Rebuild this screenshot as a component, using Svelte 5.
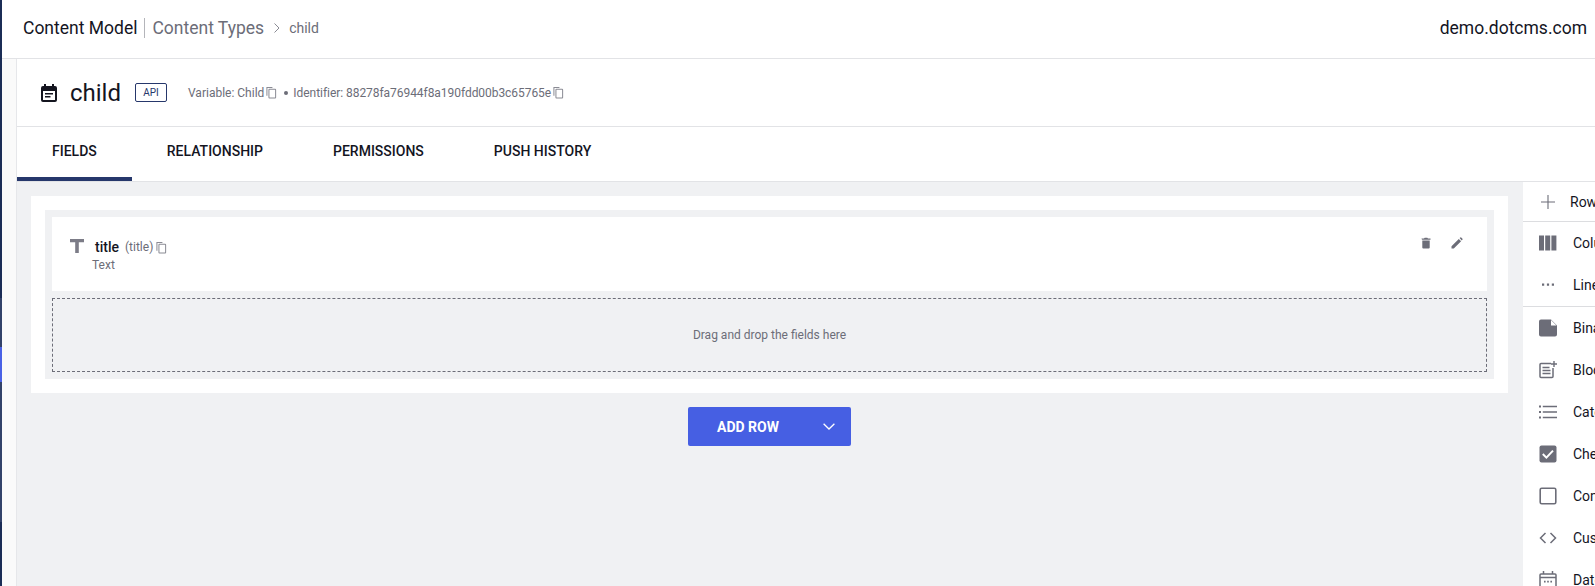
<script lang="ts">
	// Right rail: the page clips these labels at the window edge
	const layoutItems = [
		{ label: 'Column', icon: 'columns' },
		{ label: 'Line Divider', icon: 'dots' }
	];
	const fieldItems = [
		{ label: 'Binary', icon: 'binary' },
		{ label: 'Block Editor', icon: 'block' },
		{ label: 'Category', icon: 'list' },
		{ label: 'Checkbox', icon: 'check' },
		{ label: 'Constant', icon: 'box' },
		{ label: 'Custom', icon: 'code' },
		{ label: 'Date', icon: 'date' }
	];
	const tabs = ['Fields', 'Relationship', 'Permissions', 'Push History'];
</script>

{#snippet copyIcon()}
	<svg class="copy" viewBox="0 0 12 14" width="11" height="13" fill="none" stroke="currentColor" stroke-width="1.1">
		<path d="M1 10.5V1.5h6" />
		<rect x="3.2" y="3.4" width="7.3" height="9.6" rx="0.6" />
	</svg>
{/snippet}

{#snippet railIcon(name: string)}
	<svg class="rail-icon" viewBox="0 0 18 18" width="18" height="18">
		{#if name === 'columns'}
			<path fill="currentColor" d="M0 1h5v15H0zM6.2 1h5v15h-5zM12.4 1h5v15h-5z" transform="translate(0 .5)" />
		{:else if name === 'dots'}
			<path fill="currentColor" d="M3 7.6h2.2v2.2H3zM7.9 7.6h2.2v2.2H7.9zM12.8 7.6H15v2.2h-2.2z" />
		{:else if name === 'binary'}
			<path fill="currentColor" d="M2 0.5h10l6 6v9a2 2 0 0 1-2 2H2a2 2 0 0 1-2-2v-13a2 2 0 0 1 2-2z" />
			<path fill="#fff" d="M12 1v5.500h5.500z" />
		{:else if name === 'block'}
			<path fill="none" stroke="currentColor" stroke-width="1.5" d="M12 2.5H2a1 1 0 0 0-1 1v12a1 1 0 0 0 1 1h11a1 1 0 0 0 1-1V7" />
			<path fill="none" stroke="currentColor" stroke-width="1.4" d="M3.5 6.5h7M3.500 9.5h8M3.500 12.5h8M15 0v6M12 3h6" />
		{:else if name === 'list'}
			<path fill="currentColor" d="M0 2.6h2v2H0zM0 8h2v2H0zM0 13.4h2v2H0z" />
			<path fill="none" stroke="currentColor" stroke-width="1.5" d="M3.8 3.6H18M3.8 9H18M3.8 14.4H18" />
		{:else if name === 'check'}
			<rect x="0.5" y="0.5" width="17" height="17" rx="2" fill="currentColor" />
			<path fill="none" stroke="#fff" stroke-width="2" d="M3.8 9l3.6 3.6 6.6-7" />
		{:else if name === 'box'}
			<rect x="1.2" y="1.2" width="15.6" height="15.6" rx="1.5" fill="none" stroke="currentColor" stroke-width="1.6" />
		{:else if name === 'code'}
			<path fill="none" stroke="currentColor" stroke-width="1.5" d="M6.500 4L1.500 9l5 5M11.500 4l5 5-5 5" />
		{:else}
			<path fill="none" stroke="currentColor" stroke-width="1.5" d="M2 3h14a1 1 0 0 1 1 1v12a1 1 0 0 1-1 1H2a1 1 0 0 1-1-1V4a1 1 0 0 1 1-1zM1 6.500h16M4.500 0v3.500M13.500 0v3.500" />
			<path fill="currentColor" d="M5 9.800h1.600v1.600H5zM8.200 9.800h1.600v1.600H8.200zM11.400 9.800H13v1.600h-1.600z" />
		{/if}
	</svg>
{/snippet}

<div class="page">
	<div class="nav-strip">
		<span class="seg navy"></span>
		<span class="seg slate-top"></span>
		<span class="seg active"></span>
		<span class="seg slate"></span>
		<span class="seg navy-end"></span>
	</div>

	<div class="shell">
		<header class="topbar">
			<div class="crumbs">
				<span class="crumb-root">Content Model</span>
				<span class="crumb-sep"></span>
				<span class="crumb-parent">Content Types</span>
				<svg class="crumb-arrow" viewBox="0 0 8 12" width="8" height="12" fill="none" stroke="currentColor" stroke-width="1">
					<path d="M1.500 1.500L6 6l-4.500 4.500" />
				</svg>
				<span class="crumb-current">child</span>
			</div>
			<div class="site">demo.dotcms.com</div>
		</header>

		<div class="body">
			<div class="gutter"></div>
			<div class="content">
				<section class="title-bar">
					<svg class="type-icon" viewBox="0 0 16 18" width="16" height="18">
						<path fill="#14151f" d="M3 0h2v2h6V0h2v2h1a2 2 0 0 1 2 2v12a2 2 0 0 1-2 2H2a2 2 0 0 1-2-2V4a2 2 0 0 1 2-2h1z" />
						<path fill="#fff" d="M2 7h12v9H2z" />
						<path fill="#14151f" d="M4 9h8v1.600H4zM4 12h5.500v1.600H4z" />
					</svg>
					<h1>child</h1>
					<span class="api">API</span>
					<div class="meta">
						<span>Variable: Child</span>
						{@render copyIcon()}
						<span class="dot"></span>
						<span class="identifier">Identifier: 88278fa76944f8a190fdd00b3c65765e</span>
						{@render copyIcon()}
					</div>
				</section>

				<nav class="tabs">
					{#each tabs as tab, i}
						<div class="tab" class:selected={i === 0}>{tab}</div>
					{/each}
				</nav>

				<div class="workspace">
					<main class="canvas">
						<div class="card">
							<div class="row-inner">
								<div class="field">
									<svg class="t-icon" viewBox="0 0 14 14" width="14" height="14">
										<path fill="currentColor" d="M0 0h14v3.200H8.800V14H5.200V3.200H0z" />
									</svg>
									<div class="field-text">
										<div class="field-head">
											<span class="field-name">title</span>
											<span class="field-var">(title)</span>
											{@render copyIcon()}
										</div>
										<div class="field-type">Text</div>
									</div>
									<div class="field-actions">
										<svg viewBox="0 0 12 12" width="12" height="12">
											<path fill="currentColor" d="M1.500 1.500h2.500l.7-.8h2.600l.7.8h2.500v1.300h-8.500zM2.300 3.500h7.400v7a1 1 0 0 1-1 1H3.300a1 1 0 0 1-1-1z" />
										</svg>
										<svg viewBox="0 0 12 12" width="12" height="12">
											<path fill="currentColor" d="M0.500 9.200L7.800 1.900l2.300 2.300-7.300 7.300H.5zM8.600 1.100l.8-.6a.6.6 0 0 1 .8 0l1.300 1.300a.6.6 0 0 1 0 .8l-.7.800z" />
										</svg>
									</div>
								</div>
								<div class="dropzone">Drag and drop the fields here</div>
							</div>
						</div>
						<button class="add-row" type="button">
							<span>ADD ROW</span>
							<svg viewBox="0 0 12 7" width="12" height="7" fill="none" stroke="currentColor" stroke-width="1.300">
								<path d="M.6.800L6 6l5.400-5.200" />
							</svg>
						</button>
					</main>

					<aside class="rail">
						<div class="rail-group first">
							<div class="rail-item row-item">
								<svg class="rail-icon" viewBox="0 0 18 18" width="18" height="18" fill="none" stroke="currentColor" stroke-width="1.100">
									<path d="M9 2v14M2 9h14" />
								</svg>
								<span>Row</span>
							</div>
						</div>
						<div class="rail-group">
							{#each layoutItems as item}
								<div class="rail-item">
									{@render railIcon(item.icon)}
									<span>{item.label}</span>
								</div>
							{/each}
						</div>
						<div class="rail-fields">
							{#each fieldItems as item}
								<div class="rail-item">
									{@render railIcon(item.icon)}
									<span>{item.label}</span>
								</div>
							{/each}
						</div>
					</aside>
				</div>
			</div>
		</div>
	</div>
</div>

<style>
	:global(body) {
		margin: 0;
		overflow: hidden;
	}

	.page {
		display: flex;
		width: 1595px;
		height: 586px;
		overflow: hidden;
		background: #fff;
		font-family: Roboto, 'Liberation Sans', sans-serif;
		color: #14151f;
	}

	.nav-strip {
		display: flex;
		flex-direction: column;
		flex: 0 0 2px;
	}

	.seg {
		display: block;
	}

	.navy {
		height: 298px;
		background: #1b2d56;
	}

	.slate-top {
		height: 49px;
		background: #33436a;
	}

	.active {
		height: 35px;
		background: #4a62e6;
	}

	.slate {
		height: 140px;
		background: #33436a;
	}

	.navy-end {
		flex: 1;
		background: #1b2d56;
	}

	.shell {
		display: flex;
		flex-direction: column;
		flex: 1;
		min-width: 0;
	}

	.topbar {
		display: flex;
		align-items: center;
		justify-content: space-between;
		box-sizing: border-box;
		height: 59px;
		padding: 0 8px 2px 21px;
		border-bottom: 1px solid #e2e3e6;
	}

	.crumbs {
		display: flex;
		align-items: center;
	}

	.crumb-root {
		font-size: 17.5px;
	}

	.crumb-sep {
		width: 1px;
		height: 20px;
		margin: 0 7px;
		background: #b4b5ba;
	}

	.crumb-parent {
		font-size: 17.5px;
		color: #6c6d78;
	}

	.crumb-arrow {
		margin: 0 8px 0 9px;
		color: #8a8b94;
	}

	.crumb-current {
		font-size: 14px;
		color: #6c6d78;
	}

	.site {
		font-size: 17.5px;
	}

	.body {
		display: flex;
		flex: 1;
		min-height: 0;
	}

	.gutter {
		box-sizing: border-box;
		flex: 0 0 15px;
		background: #fafafa;
		border-right: 1px solid #e6e7ea;
	}

	.content {
		display: flex;
		flex-direction: column;
		flex: 1;
		min-width: 0;
	}

	.title-bar {
		display: flex;
		align-items: center;
		box-sizing: border-box;
		height: 68px;
		padding: 0 0 0 24px;
		border-bottom: 1px solid #e2e3e6;
	}

	.type-icon {
		margin-right: 13px;
	}

	h1 {
		margin: 0 14px 0 0;
		font-size: 24px;
		font-weight: 400;
		line-height: 1;
	}

	.api {
		box-sizing: border-box;
		width: 32px;
		height: 19px;
		margin-right: 21px;
		border: 1px solid #26376b;
		border-radius: 2px;
		font-size: 10px;
		line-height: 17px;
		text-align: center;
		color: #26376b;
	}

	.meta {
		display: flex;
		align-items: center;
		font-size: 12px;
		color: #6c6d78;
	}

	.identifier {
		letter-spacing: -0.05px;
	}

	.copy {
		margin-left: 2px;
		color: #8a8b94;
	}

	.dot {
		width: 4px;
		height: 4px;
		margin: 0 5px 0 7px;
		border-radius: 50%;
		background: #6c6d78;
	}

	.tabs {
		display: flex;
		box-sizing: border-box;
		height: 55px;
		border-bottom: 1px solid #e2e3e6;
	}

	.tab {
		box-sizing: border-box;
		height: 54px;
		padding: 15px 35px 0;
		font-size: 14px;
		font-weight: 500;
		line-height: 18px;
		text-transform: uppercase;
	}

	.tab.selected {
		border-bottom: 4px solid #26376b;
	}

	.workspace {
		display: flex;
		flex: 1;
		min-height: 0;
	}

	.canvas {
		display: flex;
		flex-direction: column;
		align-items: center;
		flex: 1;
		min-width: 0;
		padding: 14px 15px 0 14px;
		background: #f0f1f3;
	}

	.card {
		align-self: stretch;
		box-sizing: border-box;
		padding: 14px;
		background: #fff;
	}

	.row-inner {
		display: flex;
		flex-direction: column;
		gap: 7px;
		padding: 7px;
		background: #f0f1f3;
	}

	.field {
		display: flex;
		box-sizing: border-box;
		height: 74px;
		padding: 22px 24px 0 18px;
		background: #fff;
	}

	.t-icon {
		flex: none;
		color: #7c7c87;
	}

	.field-text {
		margin-left: 8px;
		margin-top: -1px;
	}

	.field-head {
		display: flex;
		align-items: center;
		height: 18px;
		padding-left: 3px;
	}

	.field-name {
		font-size: 14px;
		font-weight: 500;
		margin-right: 6px;
	}

	.field-var {
		margin-right: 1px;
		font-size: 12px;
		color: #6c6d78;
	}

	.field-type {
		margin-top: 1px;
		font-size: 12px;
		line-height: 16px;
		color: #6c6d78;
	}

	.field-actions {
		display: flex;
		gap: 19px;
		margin-left: auto;
		margin-top: -2px;
		color: #6c6d78;
	}

	.dropzone {
		display: flex;
		align-items: center;
		justify-content: center;
		box-sizing: border-box;
		height: 74px;
		border: 1px dashed #6c6d78;
		font-size: 12px;
		color: #6c6d78;
	}

	.add-row {
		display: flex;
		align-items: center;
		justify-content: space-between;
		box-sizing: border-box;
		width: 163px;
		height: 39px;
		margin-top: 14px;
		padding: 0 16px 0 29px;
		border: 0;
		border-radius: 2px;
		background: #465fe3;
		font-family: inherit;
		font-size: 14px;
		font-weight: 700;
		color: #fff;
	}

	.rail {
		flex: 0 0 72px;
		overflow: hidden;
		white-space: nowrap;
		font-size: 14px;
		background: #fff;
	}

	.rail-group {
		border-bottom: 1px solid #dcdde0;
	}

	.rail-group.first {
		height: 39px;
	}

	.rail-item {
		display: flex;
		align-items: center;
		gap: 16px;
		height: 42px;
		padding-left: 16px;
		box-sizing: border-box;
	}

	.row-item {
		height: 39px;
		padding-top: 1px;
		gap: 13px;
	}

	.rail-icon {
		flex: none;
		color: #6c6d78;
	}
</style>
